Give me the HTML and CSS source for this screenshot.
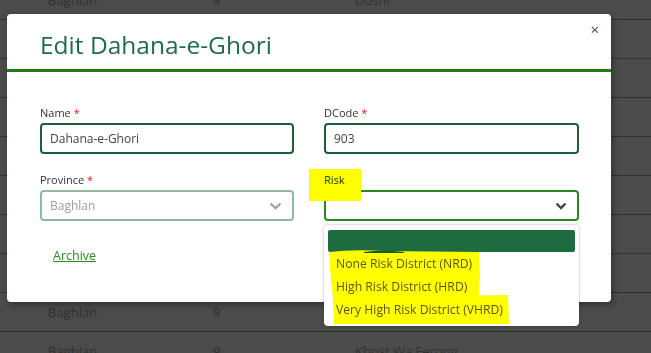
FILE: index.html
```html
<!DOCTYPE html>
<html>
<head>
<meta charset="utf-8">
<link rel="stylesheet" href="styles.css">
</head>
<body>
<div class="table">
  <div class="row"><span class="c1">Baghlan</span><span class="c2">9</span><span class="c3">Doshi</span></div>
  <div class="row"><span class="c1">Baghlan</span><span class="c2">9</span><span class="c3"></span></div>
  <div class="row"><span class="c1">Baghlan</span><span class="c2">9</span><span class="c3"></span></div>
  <div class="row"><span class="c1">Baghlan</span><span class="c2">9</span><span class="c3"></span></div>
  <div class="row"><span class="c1">Baghlan</span><span class="c2">9</span><span class="c3"></span></div>
  <div class="row"><span class="c1">Baghlan</span><span class="c2">9</span><span class="c3"></span></div>
  <div class="row"><span class="c1">Baghlan</span><span class="c2">9</span><span class="c3"></span></div>
  <div class="row"><span class="c1">Baghlan</span><span class="c2">9</span><span class="c3"></span></div>
  <div class="row"><span class="c1">Baghlan</span><span class="c2">9</span><span class="c3"></span></div>
  <div class="row"><span class="c1">Baghlan</span><span class="c2">9</span><span class="c3">Khost Wa Ferong</span></div>
</div>

<div class="modal">
  <div class="modal-header">
    <h1 class="title">Edit Dahana-e-Ghori</h1>
    <span class="close">&#215;</span>
  </div>
  <div class="modal-body">
    <div class="grid">
      <div class="field">
        <label class="label">Name <span class="req">*</span></label>
        <div class="input dark">Dahana-e-Ghori</div>
      </div>
      <div class="field">
        <label class="label">DCode <span class="req">*</span></label>
        <div class="input dark">903</div>
      </div>
      <div class="field">
        <label class="label">Province <span class="req">*</span></label>
        <div class="input light select">
          <span class="placeholder">Baghlan</span>
          <svg class="chev" width="13" height="8" viewBox="0 0 13 8"><path d="M1.5 1.5 L6.5 6.2 L11.5 1.5" fill="none" stroke="#9aa0a6" stroke-width="2.2"/></svg>
        </div>
      </div>
      <div class="field">
        <label class="label risk"><span class="risk-hl"></span><span class="risk-text">Risk</span></label>
        <div class="input bright select">
          <span></span>
          <svg class="chev" width="12" height="8" viewBox="0 0 12 8"><path d="M1.5 1.5 L6 6 L10.5 1.5" fill="none" stroke="#3a4654" stroke-width="2.4"/></svg>
        </div>
        <div class="dropdown">
          <div class="selected-bar"></div>
          <svg class="hl" width="255" height="101" viewBox="0 0 255 101">
            <path d="M5 27 Q30 24 60 26 L155 27 L156 56 L7 56 Z" fill="#ffff00"/>
            <path d="M7 55 L155 55 L155 74 L9 74 Z" fill="#ffff00"/>
            <path d="M9 72 L184 70 L185 99 L10 99 Z" fill="#ffff00"/>
            <path d="M40 27 Q60 24.5 80 27 L80 28 L40 28 Z" fill="#1a5a22"/>
          </svg>
          <div class="opt">None Risk District (NRD)</div>
          <div class="opt">High Risk District (HRD)</div>
          <div class="opt">Very High Risk District (VHRD)</div>
        </div>
      </div>
    </div>
    <a class="archive" href="#">Archive</a>
  </div>
</div>
</body>
</html>
```

FILE: styles.css
```css
* { box-sizing: border-box; }
html, body {
  margin: 0;
  padding: 0;
  width: 651px;
  height: 353px;
  overflow: hidden;
}
body {
  background: #4b4b4b;
  font-family: "Open Sans", "Liberation Sans", sans-serif;
}
.table {
  margin-top: -19px;
}
.row {
  height: 39px;
  border-bottom: 1px solid #263a22;
  display: flex;
  align-items: center;
  color: #303030;
  font-size: 13px;
}
.c1 { width: 165px; padding-left: 48px; }
.c2 { width: 190px; padding-left: 48px; }
.c3 { padding-left: 0; }

.modal {
  position: fixed;
  left: 7px;
  top: 14px;
  width: 604px;
  height: 288px;
  background: #fff;
  border-radius: 4px;
  box-shadow: 2px 3px 6px rgba(0,0,0,0.35);
}
.modal-header {
  height: 58px;
  border-bottom: 3px solid #217a13;
  padding: 15px 12px 0 33px;
  display: flex;
  justify-content: space-between;
  align-items: flex-start;
}
.title {
  margin: 0;
  font-size: 24.5px;
  font-weight: 400;
  line-height: 32px;
  color: #1f6b4a;
}
.close {
  font-size: 15px;
  line-height: 15px;
  color: #5a3a40;
  margin-top: -7px;
}
.modal-body {
  padding: 33px 32px 0 33px;
}
.grid {
  display: grid;
  grid-template-columns: 254px 255px;
  column-gap: 30px;
  row-gap: 18px;
}
.field {
  position: relative;
  display: flex;
  flex-direction: column;
}
.label {
  font-size: 11px;
  line-height: 15px;
  color: #333;
  margin-bottom: 3px;
  height: 15px;
}
.req { color: #e02020; }
.risk { position: relative; }
.risk-hl {
  position: absolute;
  left: -15px;
  top: -3px;
  width: 52px;
  height: 32px;
  background: #ffff00;
}
.risk-text { position: relative; color: #333300; }
.input {
  height: 31px;
  border-radius: 4px;
  border: 2px solid #1e5e3a;
  padding: 0 8px;
  font-size: 12px;
  color: #444;
  display: flex;
  align-items: center;
}
.input.light { border-color: #8fbb9c; }
.input.bright { border-color: #268a1c; }
.select { justify-content: space-between; }
.placeholder { color: #9aa0a6; }
.chev { margin-right: 2px; }
.dropdown {
  position: absolute;
  left: 0;
  top: 53px;
  width: 255px;
  height: 101px;
  background: #fff;
  border-radius: 4px;
  box-shadow: 0 0 3px rgba(0,0,0,0.3);
  padding: 5px 4px 0 4px;
  z-index: 2;
}
.selected-bar {
  height: 22px;
  background: #1e6b40;
  border-radius: 2px;
}
.hl {
  position: absolute;
  left: 0;
  top: 0;
}
.opt {
  position: relative;
  font-size: 12.2px;
  line-height: 23px;
  color: #5a5a00;
  padding-left: 8px;
}
.opt:first-of-type { margin-top: 6px; }
.archive {
  display: inline-block;
  margin-top: 26px;
  margin-left: 13px;
  font-size: 12.5px;
  color: #2a8a1a;
  text-decoration: underline;
}
```
